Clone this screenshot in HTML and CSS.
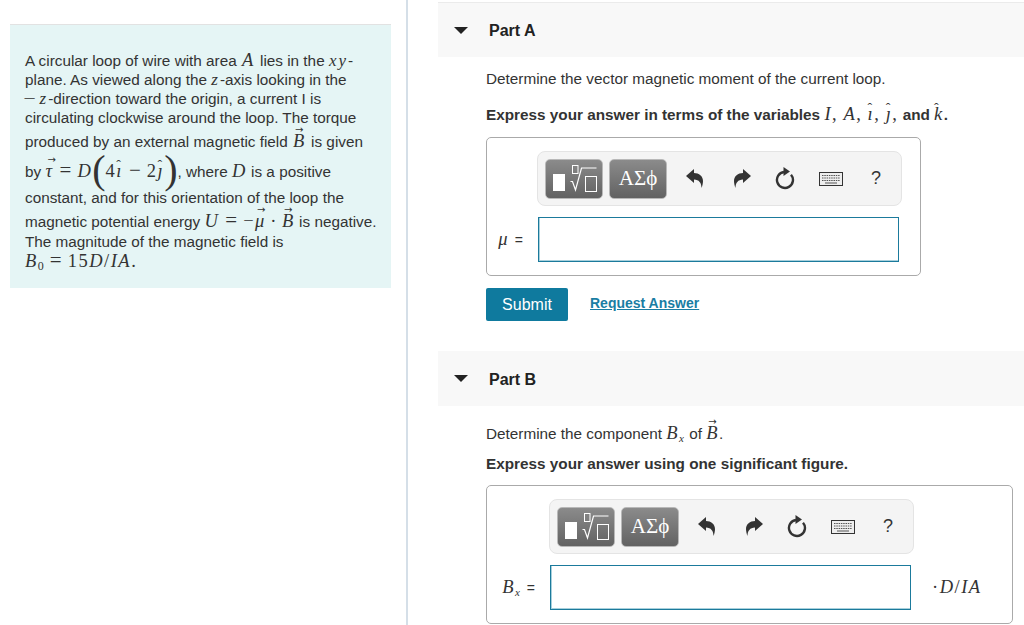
FILE: index.html
```html
<!DOCTYPE html>
<html lang="en">
<head>
    <meta charset="UTF-8">
    <title>Part A</title>
    <link rel="stylesheet" href="styles.css">
</head>
<body>
<svg class="sprite" xmlns="http://www.w3.org/2000/svg">
    <symbol id="icon-templates" viewBox="0 0 46 32">
        <rect x="2" y="11" width="12" height="17" fill="#fff"/>
        <rect x="21.500" y="2.500" width="5.500" height="8" fill="none" stroke="#fff"/>
        <path d="M19.500 18.500h2l3 8.500 6-22h15" fill="none" stroke="#fff" stroke-width="1.200"/>
        <rect x="34.500" y="13.500" width="11" height="15" fill="none" stroke="#fff"/>
    </symbol>
    <symbol id="icon-undo" viewBox="0 0 18 19">
        <path d="M0 7L8 0v4c5 0 9 3 9 8 0 2-.5 4.500-1.500 7 0-5-2.500-8.500-7.500-8.500V14z" fill="#333"/>
    </symbol>
    <symbol id="icon-redo" viewBox="0 0 18 19">
        <path d="M18 7L10 0v4C5 4 1 7 1 12c0 2 .5 4.500 1.500 7 0-5 2.500-8.500 7.500-8.500V14z" fill="#333"/>
    </symbol>
    <symbol id="icon-reset" viewBox="0 0 20 23">
        <path d="M16 7.700A8 8 0 1 1 9 5" fill="none" stroke="#333" stroke-width="2.400"/>
        <path d="M8.500 0l6.500 4.500L8.500 9z" fill="#333"/>
    </symbol>
    <symbol id="icon-keys" viewBox="0 0 24 14">
        <rect x=".5" y=".5" width="23" height="13" fill="#eee" stroke="#333"/>
        <path d="M3 3.500h18M3 6h18M3 8.500h18" stroke="#555" stroke-dasharray="1.500 .8"/>
        <path d="M6 11h12" stroke="#555"/>
    </symbol>
</svg>
<div class="layout">
    <aside class="sidebar">
        <div class="intro">
            <p class="line">A circular loop of wire with area <i class="math big wide">A</i> lies in the <i class="math mid">xy</i>-</p>
            <p class="line">plane. As viewed along the <i class="math mid">z</i>-axis looking in the</p>
            <p class="line"><span class="math mid minus">&minus;</span><i class="math mid">z</i>-direction toward the origin, a current I is</p>
            <p class="line">circulating clockwise around the loop. The torque</p>
            <p class="line line-b">produced by an external magnetic field <i class="math big vec wide">B</i> is given</p>
            <p class="line line-c">by <i class="math big vec">&tau;</i><span class="math big rel">=</span><i class="math big">D</i><span class="paren">(</span><span class="math big">4</span><i class="math big hat">&#305;</i><span class="math big rel">&minus;</span><span class="math big">2</span><i class="math big hat">&#567;</i><span class="paren">)</span>, where <i class="math big">D</i> is a positive</p>
            <p class="line line-d">constant, and for this orientation of the loop the</p>
            <p class="line line-e">magnetic potential energy <i class="math big">U</i><span class="math big rel">=</span><span class="math big">&minus;</span><i class="math big vec">&mu;</i> <span class="math big">&middot;</span> <i class="math big vec">B</i> is negative.</p>
            <p class="line line-g">The magnitude of the magnetic field is</p>
            <p class="line line-f"><i class="math big">B</i><sub class="sub">0</sub><span class="math big rel">=</span><span class="math big">15</span><i class="math big">D</i><span class="math big">/</span><i class="math big">IA</i><span class="math big">.</span></p>
        </div>
    </aside>

    <main class="content">
        <section class="part">
            <header class="part-head part-head-first">
                <span class="caret"></span>
                <h2>Part A</h2>
            </header>
            <div class="part-body">
                <p class="prompt">Determine the vector magnetic moment of the current loop.</p>
                <p class="express express-a">Express your answer in terms of the variables <i class="math big">I</i><span class="math big comma">,</span> <i class="math big">A</i><span class="math big comma">,</span> <i class="math big hat">&#305;</i><span class="math big comma">,</span> <i class="math big hat">&#567;</i><span class="math big">,</span> and <i class="math big hat">k</i>.</p>
                <div class="answer-box answer-a">
                    <div class="toolbar">
                        <button class="tool-btn"><svg class="icon-templates"><use href="#icon-templates"/></svg></button>
                        <button class="tool-btn greek">&Alpha;&Sigma;&#981;</button>
                        <svg class="tool tool-undo"><use href="#icon-undo"/></svg>
                        <svg class="tool tool-redo"><use href="#icon-redo"/></svg>
                        <svg class="tool tool-reset"><use href="#icon-reset"/></svg>
                        <svg class="tool tool-keys"><use href="#icon-keys"/></svg>
                        <span class="tool-help">?</span>
                    </div>
                    <div class="answer-row">
                        <label class="answer-label"><i class="math big">&mu;</i> <span class="eq">=</span></label>
                        <div class="answer-input"></div>
                    </div>
                </div>
                <div class="actions">
                    <button class="submit">Submit</button>
                    <a href="#" class="request">Request Answer</a>
                </div>
            </div>
        </section>

        <section class="part part-b">
            <header class="part-head">
                <span class="caret"></span>
                <h2>Part B</h2>
            </header>
            <div class="part-body">
                <p class="prompt prompt-b">Determine the component <i class="math big">B</i><sub class="sub sub-i">x</sub> of <i class="math big vec">B</i>.</p>
                <p class="express express-b">Express your answer using one significant figure.</p>
                <div class="answer-box answer-b">
                    <div class="toolbar">
                        <button class="tool-btn"><svg class="icon-templates"><use href="#icon-templates"/></svg></button>
                        <button class="tool-btn greek">&Alpha;&Sigma;&#981;</button>
                        <svg class="tool tool-undo"><use href="#icon-undo"/></svg>
                        <svg class="tool tool-redo"><use href="#icon-redo"/></svg>
                        <svg class="tool tool-reset"><use href="#icon-reset"/></svg>
                        <svg class="tool tool-keys"><use href="#icon-keys"/></svg>
                        <span class="tool-help">?</span>
                    </div>
                    <div class="answer-row">
                        <label class="answer-label"><i class="math big">B</i><sub class="sub sub-i">x</sub> <span class="eq">=</span></label>
                        <div class="answer-input"></div>
                        <span class="answer-unit"><span class="math big">&middot;</span><i class="math big">D</i><span class="math big">/</span><i class="math big">IA</i></span>
                    </div>
                </div>
            </div>
        </section>
    </main>
</div>
</body>
</html>
```
FILE: styles.css
```css
* {
    box-sizing: border-box;
    margin: 0;
    padding: 0;
}

html, body {
    height: 100%;
    overflow: hidden;
}

body {
    font-family: 'Liberation Sans', Arial, sans-serif;
    font-size: 15.3px;
    color: #333;
    background-color: #fff;
}

.sprite {
    display: none;
}

.layout {
    display: flex;
    height: 625px;
}

.sidebar {
    width: 408px;
    flex: none;
    padding: 24px 15px 0 10px;
    border-right: 2px solid #d5dfe8;
}

.intro {
    height: 264px;
    padding: 26px 15px 0;
    background-color: #e5f5f5;
    border-top: 1px solid #e2e2e2;
}

.line {
    height: 19px;
    line-height: 19px;
    white-space: nowrap;
}

.line-b { height: 29px; line-height: 29px; }
.line-c { height: 28px; line-height: 29px; margin-top: 1px; }
.line-d { height: 27px; line-height: 26px; }
.line-e { height: 22px; margin-top: -2px; }
.line-g { height: 20px; }
.line-f { height: 22px; margin-top: -2px; }

.math {
    font-family: 'Liberation Serif', 'Times New Roman', serif;
    font-weight: normal;
}

.big {
    font-size: 18.5px;
    line-height: 1;
    letter-spacing: 1.5px;
}

.mid {
    font-size: 17px;
    line-height: 1;
    letter-spacing: 2px;
}

.wide {
    margin: 0 1px;
}

.minus {
    display: inline-block;
    margin-right: 3px;
    transform: scaleX(1.3);
}

.comma {
    margin-right: 1px;
}

.rel {
    margin: 0 6px;
    font-size: 21px;
    letter-spacing: 0;
}

.vec, .hat {
    position: relative;
    display: inline-block;
}

.vec::before {
    content: "\2192";
    position: absolute;
    top: -7px;
    left: 2px;
    font-size: 10px;
    font-style: normal;
    font-family: 'DejaVu Sans', sans-serif;
}

.hat::before {
    content: "\02C6";
    position: absolute;
    top: -3px;
    left: 0;
    font-size: 14px;
    font-style: normal;
}

.paren {
    font-family: 'Liberation Serif', serif;
    font-size: 40px;
    line-height: 0;
    vertical-align: -6px;
}

.sub {
    font-family: 'Liberation Serif', serif;
    font-size: 12px;
    line-height: 0;
    vertical-align: -3px;
}

.sub-i {
    font-style: italic;
    font-size: 11px;
    margin-right: 1px;
}

.content {
    flex: 1;
    padding-left: 30px;
    min-width: 0;
}

.part-head {
    display: flex;
    align-items: center;
    height: 55px;
    padding-left: 16px;
    background-color: #f8f8f8;
}

.part-head-first {
    margin-top: 2px;
    border-top: 1px solid #ebebeb;
}

.part-head h2 {
    margin-left: 21px;
    padding-top: 2px;
    font-size: 16px;
    font-weight: bold;
    color: #222;
}

.caret {
    width: 0;
    height: 0;
    border-left: 7px solid transparent;
    border-right: 7px solid transparent;
    border-top: 7px solid #222;
}

.part-body {
    padding-left: 48px;
}

.prompt {
    height: 31px;
    padding-top: 13px;
    line-height: 18px;
}

.express {
    height: 18px;
    margin-top: 18px;
    line-height: 18px;
    font-weight: bold;
    white-space: nowrap;
}

.express-a {
    margin-top: 17px;
}

.answer-box {
    margin-top: 13px;
    height: 139px;
    padding-top: 13px;
    border: 1px solid #aaa;
    border-radius: 5px;
}

.answer-a {
    width: 435px;
    margin-top: 14px;
    padding-left: 50px;
}

.answer-b {
    width: 527px;
    padding-left: 62px;
    margin-top: 12px;
}

.toolbar {
    display: flex;
    align-items: center;
    width: 365px;
    height: 55px;
    padding-left: 7px;
    background-color: #f4f4f4;
    border: 1px solid #e4e4e4;
    border-radius: 8px;
}

.tool-btn {
    display: flex;
    align-items: center;
    justify-content: center;
    width: 58px;
    height: 40px;
    margin-right: 6px;
    border: 1px solid #b8b8b8;
    border-radius: 5px;
    background: linear-gradient(#8b8b8b, #626262);
}

.icon-templates {
    width: 46px;
    height: 32px;
}

.greek {
    font-family: 'Liberation Serif', serif;
    font-size: 21px;
    color: #fff;
}

.tool {
    flex: none;
}

.tool-undo { width: 18px; height: 19px; margin-left: 13px; }
.tool-redo { width: 18px; height: 19px; margin-left: 29px; }
.tool-reset { width: 20px; height: 23px; margin-left: 24px; }
.tool-keys { width: 24px; height: 14px; margin-left: 24px; }

.tool-help {
    margin-left: 28px;
    font-size: 18px;
    color: #333;
}

.answer-row {
    position: relative;
    display: flex;
    align-items: center;
    margin-top: 11px;
}

.answer-label {
    position: absolute;
    right: 100%;
    margin-right: 14px;
    white-space: nowrap;
    font-size: 14px;
}

.eq {
    margin-left: 2px;
}

.answer-input {
    width: 361px;
    height: 45px;
    margin-left: 1px;
    background-color: #fff;
    border: 1px solid #1b7a9c;
    box-shadow: inset 1px 0 0 #a8d0dc, inset 0 -1px 0 #a8d0dc;
}

.answer-unit {
    margin-left: 21px;
    white-space: nowrap;
    letter-spacing: 3px;
}

.actions {
    display: flex;
    align-items: center;
    margin-top: 12px;
}

.submit {
    width: 82px;
    height: 33px;
    background-color: #0f7a9e;
    color: #fff;
    border: none;
    border-radius: 2px;
    font-family: inherit;
    font-size: 16px;
}

.request {
    margin-left: 22px;
    margin-bottom: 4px;
    font-size: 14px;
    font-weight: bold;
    color: #1a7da3;
}

.part-b {
    margin-top: 30px;
}

.prompt-b {
    height: 36px;
    padding-top: 18px;
}

.express-b {
    margin-top: 13px;
}
```
